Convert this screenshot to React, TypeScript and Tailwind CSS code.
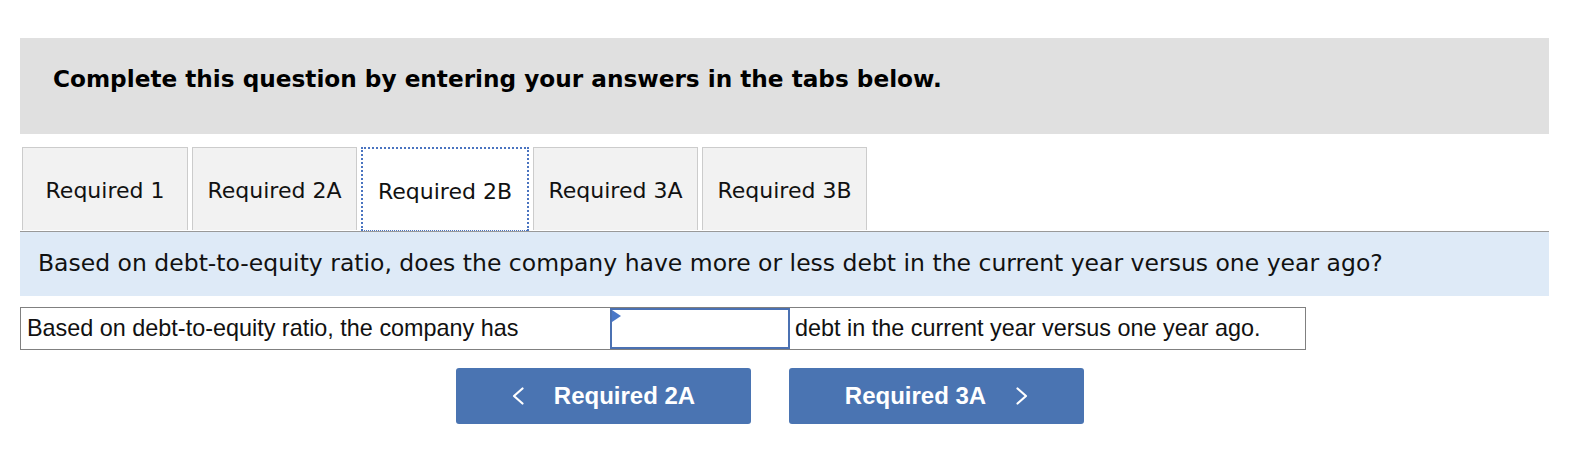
const tabs = [
  { label: "Required 1", w: "w-[166px]" },
  { label: "Required 2A", w: "w-[165px]" },
  { label: "Required 2B", w: "w-[168px]", active: true },
  { label: "Required 3A", w: "w-[165px]" },
  { label: "Required 3B", w: "w-[165px]" },
];

const verdana = "font-['Verdana','DejaVu_Sans',sans-serif]";
const arial = "font-['Liberation_Sans',Arial,sans-serif]";

function Chevron({ dir }: { dir: "left" | "right" }) {
  return (
    <svg width="12" height="18" viewBox="0 0 12 18" fill="none" stroke="currentColor" strokeWidth="2.2" strokeLinecap="round" strokeLinejoin="round" aria-hidden="true">
      {dir === "left" ? <path d="M10.5 1.5 2 9l8.5 7.5" /> : <path d="M1.5 1.5 10 9l-8.5 7.5" />}
    </svg>
  );
}

export default function App() {
  return (
    <div className="min-h-[466px] w-[1570px] bg-white pl-[20px] pr-[21px] pt-[38px]">
      <div className={`h-[96px] bg-[#e0e0e0] pl-[33px] pt-[27px] text-[23.2px] font-bold leading-[28px] text-black ${verdana}`}>
        Complete this question by entering your answers in the tabs below.
      </div>

      <div className="mt-[14px] flex h-[84px] items-end border-b border-[#999999] pl-[2px]">
        <div className="flex h-[84px] gap-[4px]">
          {tabs.map((t) =>
            t.active ? (
              <div
                key={t.label}
                className={`-mb-px flex h-[84px] items-center justify-center border-2 border-b border-dotted border-[#4a74c0] bg-white pt-[3px] text-[22px] text-[#111] ${t.w} ${verdana}`}
              >
                {t.label}
              </div>
            ) : (
              <div
                key={t.label}
                className={`flex h-[83px] items-center justify-center border border-b-0 border-[#cccccc] bg-[#f2f2f2] pt-[3px] text-[22px] text-[#111] ${t.w} ${verdana}`}
              >
                {t.label}
              </div>
            )
          )}
        </div>
      </div>

      <div className={`flex h-[64px] items-center bg-[#deeaf7] pl-[18px] text-[23.5px] text-[#111] ${verdana}`}>
        Based on debt-to-equity ratio, does the company have more or less debt in the current year versus one year ago?
      </div>

      <div className={`mt-[11px] flex h-[43px] w-[1286px] border border-[#808080] text-[23.4px] text-[#111] ${arial}`}>
        <div className="flex w-[589px] items-center pl-[6px]">Based on debt-to-equity ratio, the company has</div>
        <div className="relative w-[180px] border-2 border-[#4b71b2] bg-white">
          <span className="absolute left-0 top-0 h-0 w-0 border-y-[6px] border-l-[9px] border-y-transparent border-l-[#4a78c8]" />
        </div>
        <div className="flex flex-1 items-center pl-[5px]">debt in the current year versus one year ago.</div>
      </div>

      <div className={`mt-[18px] flex gap-[38px] pl-[436px] ${arial}`}>
        <button className="flex h-[56px] w-[295px] items-center justify-center gap-[30px] rounded-[3px] bg-[#4a74b2] text-[24px] font-bold text-white">
          <Chevron dir="left" />
          <span>Required 2A</span>
        </button>
        <button className="flex h-[56px] w-[295px] items-center justify-center gap-[30px] rounded-[3px] bg-[#4a74b2] text-[24px] font-bold text-white">
          <span>Required 3A</span>
          <Chevron dir="right" />
        </button>
      </div>
    </div>
  );
}
